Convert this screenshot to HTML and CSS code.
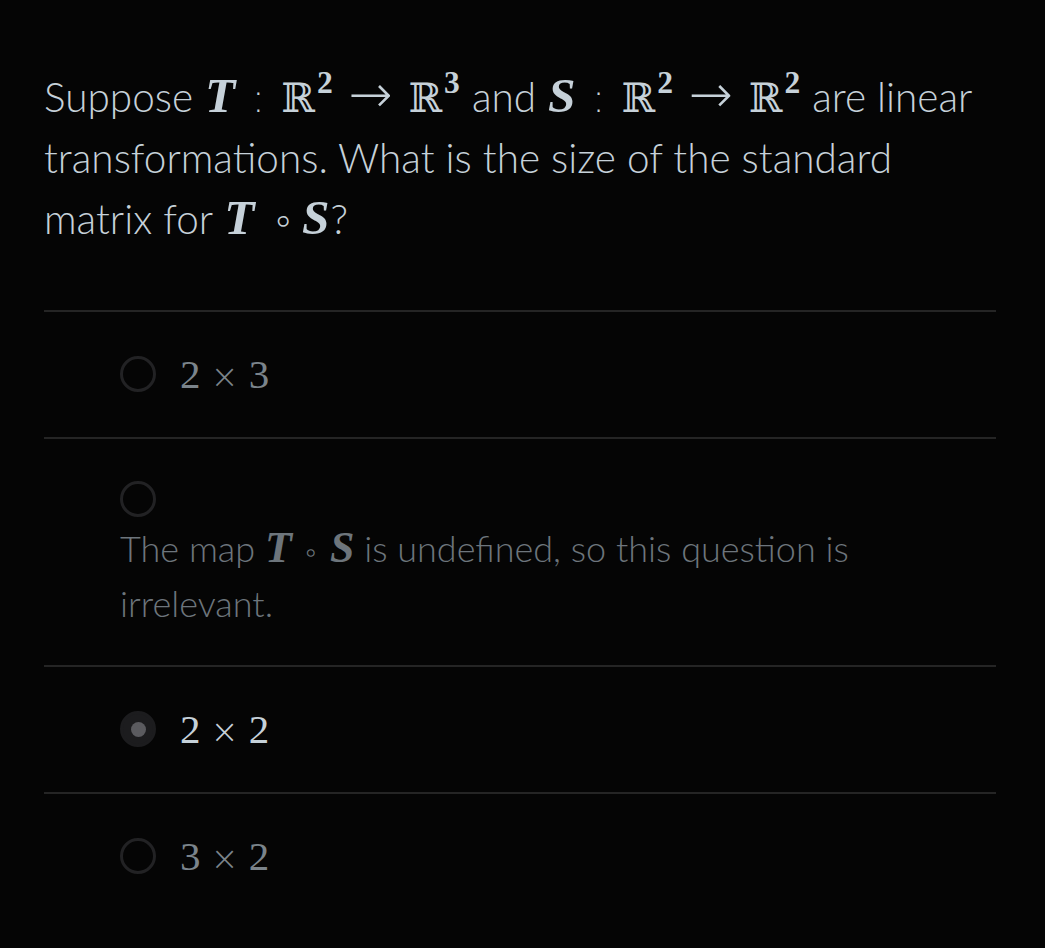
FILE: index.html
```html
<!DOCTYPE html>
<html lang="en">
<head>
<meta charset="utf-8">
<title>Question</title>
<link rel="stylesheet" href="styles.css">
</head>
<body>
<main class="quiz">
  <p class="question">Suppose <span class="m"><i class="v">T</i><span class="op">:</span><span class="bb">ℝ</span><sup class="n">2</sup><span class="op arrow">→</span><span class="bb">ℝ</span><sup class="n">3</sup></span> and <span class="m"><i class="v">S</i><span class="op">:</span><span class="bb">ℝ</span><sup class="n">2</sup><span class="op arrow">→</span><span class="bb">ℝ</span><sup class="n">2</sup></span> are linear transformations. What is the size of the standard matrix for <span class="m"><i class="v">T</i><span class="op comp">∘</span><i class="v">S</i></span>?</p>
  <ul class="options">
    <li class="option">
      <span class="radio"></span>
      <span class="label"><span class="m"><span class="n">2</span><span class="op">×</span><span class="n">3</span></span></span>
    </li>
    <li class="option stacked">
      <span class="radio"></span>
      <span class="label text">The map <span class="m"><i class="v">T</i><span class="op">∘</span><i class="v">S</i></span> is undefined, so this question is irrelevant.</span>
    </li>
    <li class="option selected">
      <span class="radio"></span>
      <span class="label"><span class="m"><span class="n">2</span><span class="op">×</span><span class="n">2</span></span></span>
    </li>
    <li class="option">
      <span class="radio"></span>
      <span class="label"><span class="m"><span class="n">3</span><span class="op">×</span><span class="n">2</span></span></span>
    </li>
  </ul>
</main>
</body>
</html>
```
FILE: styles.css
```css
html, body {
  margin: 0;
  padding: 0;
  background: #050505;
}
body {
  font-family: Lato, "Open Sans", sans-serif;
  font-weight: 300;
  color: #c6d1d9;
}
.quiz {
  width: 952px;
  padding: 66px 0 0 44px;
}
.question {
  margin: 0 0 61px;
  font-size: 40.5px;
  line-height: 61px;
}
.m {
  font-family: "Liberation Serif", "DejaVu Serif", serif;
  white-space: nowrap;
  line-height: 1;
}
.question .m {
  margin: 0 1px;
}
.v {
  font-weight: 700;
  font-style: italic;
  font-size: 1.22em;
}
.bb {
  font-family: "DejaVu Serif", "DejaVu Sans", serif;
  font-size: 1em;
}
sup.n {
  font-weight: 700;
  font-size: 0.78em;
  vertical-align: 0.6em;
  line-height: 0;
  margin-left: 2px;
}
.op {
  font-family: "DejaVu Sans", serif;
  margin: 0 0.4em;
}
.op.arrow {
  font-size: 1.3em;
  margin: 0 0.3em;
}
.op.comp {
  margin: 0 0.15em 0 0.4em;
}
.options {
  list-style: none;
  margin: 0;
  padding: 0;
}
.option {
  border-top: 2px solid #252525;
  display: flex;
  align-items: center;
  gap: 24px;
  padding: 44px 0 45px 76px;
}
.option.stacked {
  flex-direction: column;
  align-items: flex-start;
  gap: 4px;
  padding: 42px 0 34px 76px;
}
.radio {
  flex: none;
  width: 36px;
  height: 36px;
  box-sizing: border-box;
  border: 3px solid #222224;
  border-radius: 50%;
}
.selected .radio {
  background: #1c1c1e;
  border-color: #1c1c1e;
  display: flex;
  align-items: center;
  justify-content: center;
}
.selected .radio::after {
  content: "";
  width: 15px;
  height: 15px;
  border-radius: 50%;
  background: #5b5b5f;
}
.label {
  display: flex;
  align-items: center;
  height: 36px;
  font-size: 41px;
  color: #7b848b;
}
.label .op {
  font-size: 0.82em;
  margin: 0 0.3em;
}
.selected .label {
  color: #c6d1d9;
}
.label.text {
  display: block;
  height: auto;
  font-size: 36px;
  line-height: 55px;
  color: #6d757c;
  width: 790px;
}
.label.text .m .op {
  font-size: 0.8em;
  margin: 0 0.35em;
}
```
